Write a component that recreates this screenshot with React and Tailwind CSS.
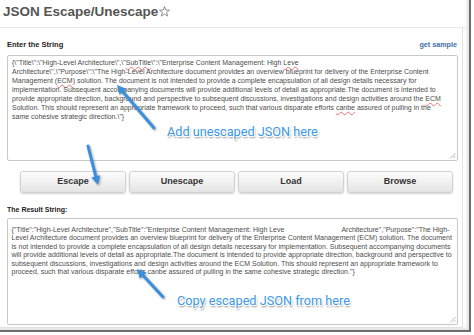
import React from 'react';

const inputLines = [
  String.raw`{\"Title\":\"High-Level Architecture\",\"~SubTitle~\":\"Enterprise Content Management: High ~Leve~`,
  String.raw`Architecture\",\"Purpose\":\"The High-Level Architecture document provides an overview blueprint for delivery of the Enterprise Content`,
  String.raw`Management (~ECM~) solution. The document is not intended to provide a complete encapsulation of all design details necessary for`,
  String.raw`implementation. Subsequent accompanying documents will provide additional levels of detail as appropriate.The document is intended to`,
  String.raw`provide appropriate direction, background and perspective to subsequent discussions, investigations and design activities around the ~ECM~`,
  String.raw`Solution. This should represent an appropriate framework to proceed, such that various disparate efforts ~canbe~ assured of pulling in the`,
  String.raw`same cohesive strategic direction.\"}`,
];

const resultLines = [
  'Level Architecture document provides an overview blueprint for delivery of the Enterprise Content Management (ECM) solution. The document',
  'is not intended to provide a complete encapsulation of all design details necessary for implementation. Subsequent accompanying documents',
  'will provide additional levels of detail as appropriate.The document is intended to provide appropriate direction, background and perspective to',
  'subsequent discussions, investigations and design activities around the ECM Solution. This should represent an appropriate framework to',
  'proceed, such that various disparate efforts canbe assured of pulling in the same cohesive strategic direction."}',
];

function Marked({ text }) {
  return text.split('~').map((part, i) =>
    i % 2 ? (
      <span key={i} className="underline decoration-wavy decoration-[#e87070] decoration-[0.6px] underline-offset-1">
        {part}
      </span>
    ) : (
      part
    )
  );
}

function Grip() {
  return (
    <svg className="absolute right-[1px] bottom-[1px]" width="7" height="7" viewBox="0 0 7 7">
      <path d="M6.5 1 L1 6.5 M6.5 4 L4 6.5" stroke="#a8a8a8" strokeWidth="0.8" />
    </svg>
  );
}

function Arrow({ x1, y1, x2, y2 }) {
  const a = Math.atan2(y2 - y1, x2 - x1);
  const bx = x2 - 9 * Math.cos(a);
  const by = y2 - 9 * Math.sin(a);
  const nx = -Math.sin(a) * 4.5;
  const ny = Math.cos(a) * 4.5;
  return (
    <g>
      <line x1={x1} y1={y1} x2={bx} y2={by} stroke="#3a8fdc" strokeWidth="3" strokeLinecap="round" />
      <polygon points={`${x2},${y2} ${bx + nx},${by + ny} ${bx - nx},${by - ny}`} fill="#3a8fdc" />
    </g>
  );
}

const buttons = ['Escape', 'Unescape', 'Load', 'Browse'];

export default function App() {
  return (
    <div className="relative w-[474px] h-[335px] bg-white overflow-hidden font-['Liberation_Sans',Arial,sans-serif]">
      <div className="w-[471px] h-[332px] border-r-2 border-b-2 border-[#6e6e6e] shadow-[inset_-2px_-2px_3px_rgba(0,0,0,0.12)]">
        <h1 className="h-[28px] pl-[3px] pt-[4.5px] text-[13.5px] leading-[13.5px] font-bold text-[#555] border-b border-[#e8e8e8] flex items-start">
          JSON Escape/Unescape
          <svg className="ml-[1px] mt-[1.5px]" width="11" height="11" viewBox="0 0 11 11">
            <polygon
              points="5.5,0.5 6.79,4.02 10.54,4.16 7.59,6.48 8.62,10.09 5.5,8 2.38,10.09 3.41,6.48 0.46,4.16 4.21,4.02"
              fill="none"
              stroke="#777"
              strokeWidth="0.8"
              strokeLinejoin="round"
            />
          </svg>
        </h1>

        <div className="w-[463px] h-[300px] border-r border-b border-[#e2e2e2] pl-[7px] pt-[12px]">
          <div className="w-[451px] h-[9px] flex justify-between items-center leading-[9px]">
            <span className="text-[7.5px] font-bold text-[#222]">Enter the String</span>
            <span className="text-[7.2px] font-bold text-[#3f70a8] pr-[1px]">get sample</span>
          </div>

          <div className="relative mt-[6px] w-[451px] h-[106px] border border-[#c8c8c8] rounded-[2px] pl-[4px] pt-[2px] text-[7px] leading-[9px] text-[#4d4d4d] overflow-hidden">
            {inputLines.map((l, i) => (
              <div key={i} className="whitespace-nowrap">
                <Marked text={l} />
              </div>
            ))}
            <Grip />
          </div>

          <div className="mt-[10px] ml-[13px] flex gap-[3px]">
            {buttons.map((b) => (
              <button
                key={b}
                className="w-[106px] h-[22px] rounded-[3px] border border-[#d2d2d2] bg-gradient-to-b from-[#fdfdfd] to-[#e4e4e4] shadow-[0_1px_2px_rgba(0,0,0,0.18)] text-[9px] font-bold text-[#333] flex items-center justify-center"
              >
                {b}
              </button>
            ))}
          </div>

          <div className="mt-[12px] h-[9px] leading-[9px] text-[7px] font-bold text-[#222]">The Result String:</div>

          <div className="relative mt-[4px] w-[451px] h-[107px] border border-[#c8c8c8] rounded-[2px] pl-[3.5px] pt-[7px] text-[7px] leading-[8.4px] text-[#4d4d4d] overflow-hidden">
            <div className="whitespace-nowrap flex">
              <span>{'{"Title":"High-Level Architecture","SubTitle":"Enterprise Content Management: High Leve'}</span>
              <span className="inline-block w-[57px]" />
              <span>{'Architecture","Purpose":"The High-'}</span>
            </div>
            {resultLines.map((l, i) => (
              <div key={i} className="whitespace-nowrap">
                {l}
              </div>
            ))}
            <Grip />
          </div>
        </div>
      </div>

      <svg
        className="absolute left-0 top-0 pointer-events-none [filter:drop-shadow(1px_1px_1px_rgba(0,0,0,0.35))]"
        width="474"
        height="335"
      >
        <Arrow x1={154} y1={128} x2={117} y2={85} />
        <Arrow x1={88} y1={146} x2={98} y2={185} />
        <Arrow x1={163} y1={297} x2={137} y2={269} />
      </svg>

      <span className="absolute left-[167px] top-[125px] whitespace-nowrap font-['Roboto',sans-serif] text-[12.7px] leading-[14px] text-[#3b99e6] [text-shadow:-1px_-1px_0_#fff,1px_-1px_0_#fff,-1px_1px_0_#fff,1px_1px_0_#fff,1px_2px_2px_rgba(0,0,0,0.55)]">
        Add unescaped JSON here
      </span>
      <span className="absolute left-[177px] top-[294px] whitespace-nowrap font-['Roboto',sans-serif] text-[12.7px] leading-[14px] text-[#3b99e6] [text-shadow:-1px_-1px_0_#fff,1px_-1px_0_#fff,-1px_1px_0_#fff,1px_1px_0_#fff,1px_2px_2px_rgba(0,0,0,0.55)]">
        Copy escaped JSON from here
      </span>
    </div>
  );
}
